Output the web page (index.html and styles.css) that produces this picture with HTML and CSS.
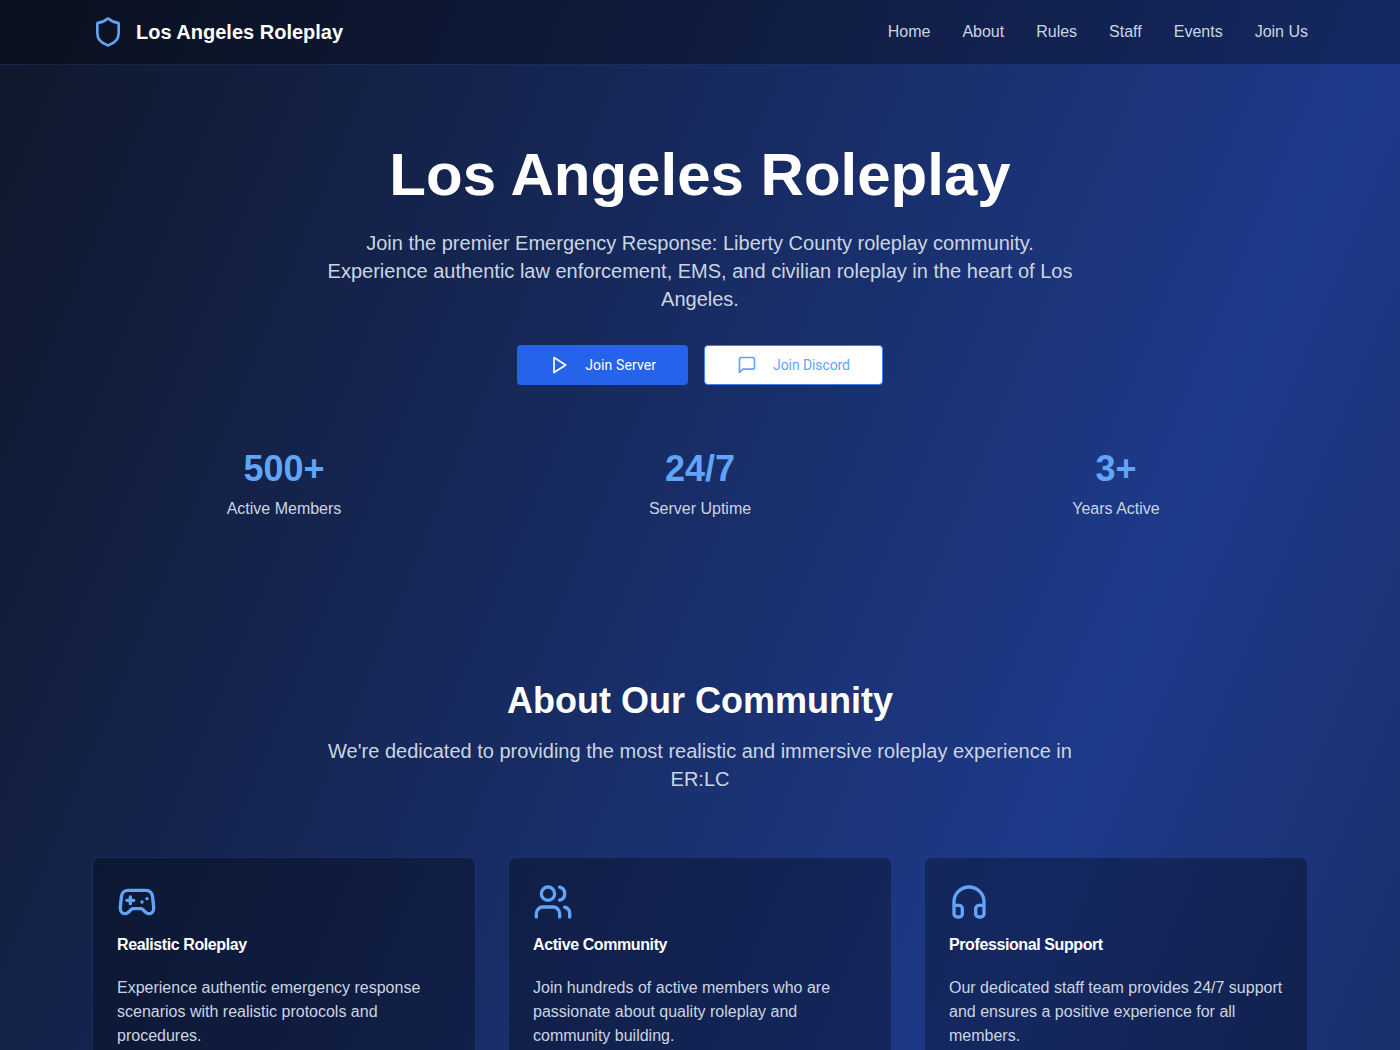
FILE: index.html
```html
<!DOCTYPE html>
<html lang="en">
<head>
    <meta charset="UTF-8">
    <meta name="viewport" content="width=device-width, initial-scale=1.0">
    <title>Los Angeles Roleplay</title>
    <link rel="stylesheet" href="styles.css">
</head>
<body>
    <nav class="navbar">
        <div class="navbar-inner">
            <a class="brand" href="#">
                <svg class="brand-icon" viewBox="0 0 24 24"><path d="M20 13c0 5-3.5 7.5-7.66 8.95a1 1 0 0 1-.67-.01C7.5 20.5 4 18 4 13V6a1 1 0 0 1 1-1c2 0 4.5-1.2 6.24-2.72a1.17 1.17 0 0 1 1.52 0C14.51 3.81 17 5 19 5a1 1 0 0 1 1 1z"/></svg>
                <span>Los Angeles Roleplay</span>
            </a>
            <div class="nav-links">
                <a href="#">Home</a>
                <a href="#">About</a>
                <a href="#">Rules</a>
                <a href="#">Staff</a>
                <a href="#">Events</a>
                <a href="#">Join Us</a>
            </div>
        </div>
    </nav>

    <section class="hero">
        <h1>Los Angeles Roleplay</h1>
        <p class="lead">Join the premier Emergency Response: Liberty County roleplay community. Experience authentic law enforcement, EMS, and civilian roleplay in the heart of Los Angeles.</p>
        <div class="hero-buttons">
            <a class="btn btn-primary" href="#">
                <svg class="btn-icon" viewBox="0 0 24 24"><polygon points="6 3 20 12 6 21 6 3"/></svg>
                Join Server
            </a>
            <a class="btn btn-outline" href="#">
                <svg class="btn-icon" viewBox="0 0 24 24"><path d="M21 15a2 2 0 0 1-2 2H7l-4 4V5a2 2 0 0 1 2-2h14a2 2 0 0 1 2 2z"/></svg>
                Join Discord
            </a>
        </div>
        <div class="stats">
            <div class="stat">
                <div class="stat-value">500+</div>
                <div class="stat-label">Active Members</div>
            </div>
            <div class="stat">
                <div class="stat-value">24/7</div>
                <div class="stat-label">Server Uptime</div>
            </div>
            <div class="stat">
                <div class="stat-value">3+</div>
                <div class="stat-label">Years Active</div>
            </div>
        </div>
    </section>

    <section class="about">
        <h2>About Our Community</h2>
        <p class="lead">We're dedicated to providing the most realistic and immersive roleplay experience in ER:LC</p>
        <div class="cards">
            <div class="card">
                <svg class="card-icon" viewBox="0 0 24 24"><line x1="6" x2="10" y1="11" y2="11"/><line x1="8" x2="8" y1="9" y2="13"/><line x1="15" x2="15.01" y1="12" y2="12"/><line x1="18" x2="18.01" y1="10" y2="10"/><path d="M17.32 5H6.68a4 4 0 0 0-3.978 3.59c-.006.052-.01.101-.017.152C2.604 9.416 2 14.456 2 16a3 3 0 0 0 3 3c1 0 1.5-.5 2-1l1.414-1.414A2 2 0 0 1 9.828 16h4.344a2 2 0 0 1 1.414.586L17 18c.5.5 1 1 2 1a3 3 0 0 0 3-3c0-1.545-.604-6.584-.685-7.258-.007-.05-.011-.1-.017-.151A4 4 0 0 0 17.32 5z"/></svg>
                <h3>Realistic Roleplay</h3>
                <p>Experience authentic emergency response scenarios with realistic protocols and procedures.</p>
            </div>
            <div class="card">
                <svg class="card-icon" viewBox="0 0 24 24"><path d="M16 21v-2a4 4 0 0 0-4-4H6a4 4 0 0 0-4 4v2"/><circle cx="9" cy="7" r="4"/><path d="M22 21v-2a4 4 0 0 0-3-3.87"/><path d="M16 3.13a4 4 0 0 1 0 7.75"/></svg>
                <h3>Active Community</h3>
                <p>Join hundreds of active members who are passionate about quality roleplay and community building.</p>
            </div>
            <div class="card">
                <svg class="card-icon" viewBox="0 0 24 24"><path d="M3 14h3a2 2 0 0 1 2 2v3a2 2 0 0 1-2 2H5a2 2 0 0 1-2-2v-7a9 9 0 0 1 18 0v7a2 2 0 0 1-2 2h-1a2 2 0 0 1-2-2v-3a2 2 0 0 1 2-2h3"/></svg>
                <h3>Professional Support</h3>
                <p>Our dedicated staff team provides 24/7 support and ensures a positive experience for all members.</p>
            </div>
        </div>
    </section>
</body>
</html>
```

FILE: styles.css
```css
* {
    box-sizing: border-box;
}

html, body {
    height: 1050px;
    overflow: hidden;
}

body {
    margin: 0;
    font-family: "Liberation Sans", Arial, sans-serif;
    color: #fff;
    /* the real page is much taller than the window, so the gradient is stretched */
    background: linear-gradient(to bottom right, #0f172a 0%, #1e3a8a 50%, #0f172a 100%) no-repeat;
    background-size: 100% 3400px;
}

a {
    text-decoration: none;
}

svg {
    fill: none;
    stroke: #60a5fa;
    stroke-width: 2;
    stroke-linecap: round;
    stroke-linejoin: round;
    flex-shrink: 0;
}

.navbar {
    height: 65px;
    background-color: rgba(0, 0, 0, 0.3);
    border-bottom: 1px solid rgba(59, 130, 246, 0.2);
}

.navbar-inner {
    max-width: 1280px;
    height: 64px;
    margin: 0 auto;
    padding: 0 32px;
    display: flex;
    align-items: center;
    justify-content: space-between;
}

.brand {
    display: flex;
    align-items: center;
    gap: 12px;
    color: #fff;
    font-size: 20px;
    font-weight: 700;
}

.brand-icon {
    width: 32px;
    height: 32px;
}

.nav-links {
    display: flex;
    gap: 32px;
}

.nav-links a {
    color: #cbd5e1;
    font-size: 16px;
}

.hero {
    max-width: 1280px;
    margin: 0 auto;
    padding: 80px 32px 0;
    text-align: center;
}

h1 {
    margin: 0 0 24px;
    font-size: 60px;
    line-height: 60px;
    font-weight: 700;
}

.lead {
    max-width: 768px;
    margin: 0 auto;
    color: #cbd5e1;
    font-size: 20px;
    line-height: 28px;
}

.hero-buttons {
    display: flex;
    justify-content: center;
    gap: 16px;
    margin-top: 32px;
}

.btn {
    height: 40px;
    padding: 0 32px;
    display: flex;
    align-items: center;
    gap: 16px;
    border-radius: 4px;
    font-family: Roboto, sans-serif;
    font-size: 14px;
}

.btn-icon {
    width: 20px;
    height: 20px;
}

.btn-primary {
    background-color: #2563eb;
    color: #fff;
    letter-spacing: 0.1px;
}

.btn-primary svg {
    stroke: #fff;
}

.btn-outline {
    background-color: #fff;
    border: 1px solid #3b82f6;
    color: #60a5fa;
    letter-spacing: -0.1px;
}

.stats {
    display: grid;
    grid-template-columns: repeat(3, 1fr);
    gap: 32px;
    margin-top: 64px;
}

.stat-value {
    color: #60a5fa;
    font-size: 36px;
    line-height: 40px;
    font-weight: 700;
}

.stat-label {
    margin-top: 8px;
    color: #cbd5e1;
    font-size: 16px;
    line-height: 24px;
}

.about {
    max-width: 1280px;
    margin: 0 auto;
    padding: 160px 32px 0;
    text-align: center;
}

h2 {
    margin: 0 0 16px;
    font-size: 36px;
    line-height: 40px;
    font-weight: 700;
}

.cards {
    display: grid;
    grid-template-columns: repeat(3, 1fr);
    gap: 32px;
    margin-top: 64px;
    text-align: left;
}

.card {
    padding: 24px;
    background-color: rgba(0, 0, 0, 0.3);
    border: 1px solid rgba(59, 130, 246, 0.2);
    border-radius: 8px;
}

.card-icon {
    display: block;
    width: 40px;
    height: 40px;
    margin-bottom: 13px;
}

h3 {
    margin: 0 0 21px;
    font-size: 16px;
    line-height: 20px;
    font-weight: 700;
    letter-spacing: -0.4px;
}

.card p {
    margin: 0;
    color: #cbd5e1;
    font-size: 16px;
    line-height: 24px;
}
```
